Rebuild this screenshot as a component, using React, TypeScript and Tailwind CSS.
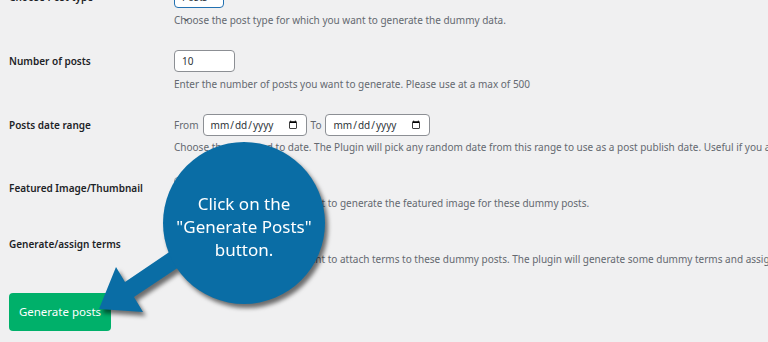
import React from "react";

const font = { fontFamily: '"Noto Sans", "Open Sans", sans-serif' };

const Row = ({ label, children }: { label: string; children: React.ReactNode }) => (
  <div className="grid grid-cols-[165px_1fr]">
    <div className="pt-[3px] text-[10px] leading-4 font-semibold text-[#1d2327]">{label}</div>
    <div>{children}</div>
  </div>
);

const Desc = ({ children }: { children: React.ReactNode }) => (
  <p className="text-[10px] leading-4 text-[#646970] whitespace-nowrap">{children}</p>
);

const Callout = () => (
  <div className="absolute inset-0 pointer-events-none [filter:drop-shadow(3px_4px_2px_rgba(0,0,0,0.55))]">
    <svg className="absolute left-0 top-0" width="768" height="342" viewBox="0 0 768 342">
      <polygon points="190,238 125,282 116,267 99,309 143,312 134,297 200,253" fill="#0a6da5" />
    </svg>
    <div className="absolute left-[163px] top-[142px] w-[162px] h-[162px] rounded-full bg-[#0a6da5] flex flex-col items-center justify-center text-white text-[17px] leading-[23px] text-center pt-[7px]">
      <span>Click on the</span>
      <span>"Generate Posts"</span>
      <span>button.</span>
    </div>
  </div>
);

export default function App() {
  return (
    <div className="relative w-[768px] h-[342px] overflow-hidden bg-[#f0f0f1]" style={font}>
      <div className="pl-[9px] -mt-[14px] flex flex-col">
        <Row label="Choose Post type">
          <div className="w-[50px] h-[22px] rounded-[4px] border border-[#2271b1] bg-white px-[7px] text-[10px] leading-[20px] text-[#2c3338]">
            Posts ⌄
          </div>
          <div className="mt-[4px]">
            <Desc>Choose the post type for which you want to generate the dummy data.</Desc>
          </div>
        </Row>

        <div className="h-[22px]" />
        <Row label="Number of posts">
          <input
            readOnly
            value="10"
            className="block w-[61px] h-[22px] rounded-[4px] border border-[#8c8f94] bg-white px-[7px] text-[10px] text-[#2c3338] outline-none"
          />
          <div className="mt-[4px]">
            <Desc>Enter the number of posts you want to generate. Please use at a max of 500</Desc>
          </div>
        </Row>

        <div className="h-[22px]" />
        <Row label="Posts date range">
          <div className="flex items-center h-[22px] text-[10px] text-[#646970]">
            <span className="mr-[4px]">From</span>
            <input
              type="date"
              className="block w-[104px] h-[22px] rounded-[4px] border border-[#8c8f94] bg-white px-[6px] text-[10px] text-[#2c3338] outline-none"
            />
            <span className="mx-[4px]">To</span>
            <input
              type="date"
              className="block w-[105px] h-[22px] rounded-[4px] border border-[#8c8f94] bg-white px-[6px] text-[10px] text-[#2c3338] outline-none"
            />
          </div>
          <div className="mt-[3px]">
            <Desc>
              Choose the from and to date. The Plugin will pick any random date from this range to use as a post publish date. Useful if you are
              testing
            </Desc>
          </div>
        </Row>

        <div className="h-[22px]" />
        <Row label="Featured Image/Thumbnail">
          <div className="w-[16px] h-[16px] rounded-[4px] border border-[#8c8f94] bg-white" />
          <div className="mt-[2px]">
            <Desc>Check these settings if you want to generate the featured image for these dummy posts.</Desc>
          </div>
        </Row>

        <div className="h-[22px]" />
        <Row label="Generate/assign terms">
          <div className="w-[16px] h-[16px] rounded-[4px] border border-[#8c8f94] bg-white" />
          <div className="mt-[2px]">
            <Desc>
              Check these settings if you want to attach terms to these dummy posts. The plugin will generate some dummy terms and assign them
            </Desc>
          </div>
        </Row>

        <div className="mt-[26px]">
          <button className="block w-[102px] h-[38px] rounded-[4px] bg-[#00b06a] text-white text-[11.5px]">Generate posts</button>
        </div>
      </div>

      <Callout />
    </div>
  );
}
